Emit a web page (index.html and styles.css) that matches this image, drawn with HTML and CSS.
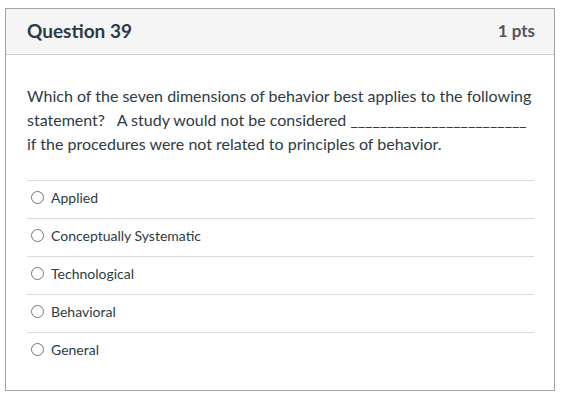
FILE: index.html
```html
<!DOCTYPE html>
<html>
<head>
<meta charset="utf-8">
<link rel="stylesheet" href="styles.css">
</head>
<body>
<div class="card">
  <div class="header">
    <h2 class="title">Question 39</h2>
    <span class="pts">1 pts</span>
  </div>
  <div class="body">
    <p class="text">Which of the seven dimensions of behavior best applies to the following statement?&nbsp;&nbsp; A study would not be considered ________________________<br>if the procedures were not related to principles of behavior.</p>
    <div class="answers">
      <label class="answer"><span class="radio"></span><span>Applied</span></label>
      <label class="answer"><span class="radio"></span><span>Conceptually Systematic</span></label>
      <label class="answer"><span class="radio"></span><span>Technological</span></label>
      <label class="answer"><span class="radio"></span><span>Behavioral</span></label>
      <label class="answer"><span class="radio"></span><span>General</span></label>
    </div>
  </div>
</div>
</body>
</html>
```
FILE: styles.css
```css
* { box-sizing: border-box; }
body {
  margin: 0;
  padding: 8px 21px 0 5px;
  font-family: Lato, "Noto Sans", sans-serif;
  color: #2d3b45;
  background: #fff;
}
.card {
  border: 1px solid #a5a5a5;
  width: 550px;
  height: 383px;
}
.header {
  background: #f5f5f5;
  border-bottom: 1px solid #c7cdd1;
  height: 46px;
  display: flex;
  align-items: center;
  justify-content: space-between;
  padding: 0 19px 3px 21px;
}
.title {
  margin: 0;
  font-size: 19px;
  font-weight: 700;
  color: #2d3b45;
}
.pts {
  font-size: 17px;
  font-weight: 700;
  color: #555;
}
.body {
  padding: 29px 20px 0 21px;
}
.text {
  margin: 0;
  font-size: 16px;
  line-height: 24px;
  color: #2d3b45;
}
.answers {
  margin-top: 24px;
}
.answer {
  display: flex;
  align-items: center;
  height: 38px;
  border-top: 1px solid #dcdcdc;
  font-size: 14px;
  padding: 0 0 5px 4px;
  gap: 7px;
  color: #2d3b45;
}
.radio {
  width: 13px;
  height: 13px;
  border: 1px solid #777;
  border-radius: 50%;
  flex: none;
}
```
